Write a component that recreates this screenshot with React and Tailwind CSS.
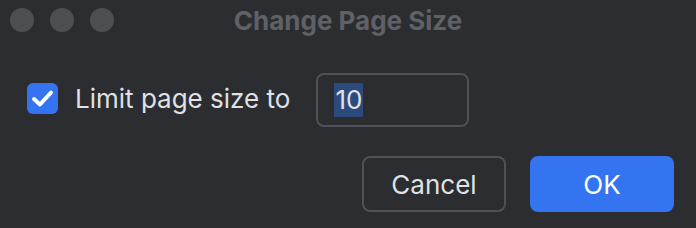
export default function App() {
  return (
    <div
      className="w-[696px] h-[228px] bg-[#2b2d30] flex flex-col overflow-hidden"
      style={{ fontFamily: "Inter, 'Noto Sans', sans-serif" }}
    >
      <div className="relative h-[40px] flex items-center justify-center">
        <div className="absolute left-[10px] top-[8px] flex gap-[16px]">
          <div className="w-[24px] h-[24px] rounded-full bg-[#4d4f53]" />
          <div className="w-[24px] h-[24px] rounded-full bg-[#4d4f53]" />
          <div className="w-[24px] h-[24px] rounded-full bg-[#4d4f53]" />
        </div>
        <div className="text-[26px] font-bold text-[#5f6166] leading-none mt-[1px]">
          Change Page Size
        </div>
      </div>
      <div className="mt-[33px] flex items-center pl-[27px]">
        <div className="w-[31px] h-[31px] rounded-[6px] bg-[#3574f0] flex items-center justify-center -mt-[3px]">
          <svg width="31" height="31" viewBox="0 0 31 31" fill="none">
            <path d="M7 16 L13 21.5 L24 9.5" stroke="white" strokeWidth="4" strokeLinecap="round" strokeLinejoin="round" />
          </svg>
        </div>
        <div className="ml-[17px] text-[26px] text-[#dfe1e5] leading-none -mt-[2px]">
          Limit page size to
        </div>
        <div className="ml-[26px] w-[153px] h-[54px] rounded-[8px] border-2 border-[#4e5157] flex items-center pl-[16px]">
          <span className="bg-[#2d4a7d] text-[26px] text-[#dfe1e5] leading-[34px] h-[34px] px-[1px]">10</span>
        </div>
      </div>
      <div className="mt-[29px] flex justify-end gap-[24px] pr-[22px]">
        <div className="w-[144px] h-[56px] rounded-[8px] border-2 border-[#4e5157] flex items-center justify-center text-[26px] text-[#dfe1e5]">
          Cancel
        </div>
        <div className="w-[144px] h-[56px] rounded-[8px] bg-[#3574f0] flex items-center justify-center text-[26px] text-white">
          OK
        </div>
      </div>
    </div>
  );
}
